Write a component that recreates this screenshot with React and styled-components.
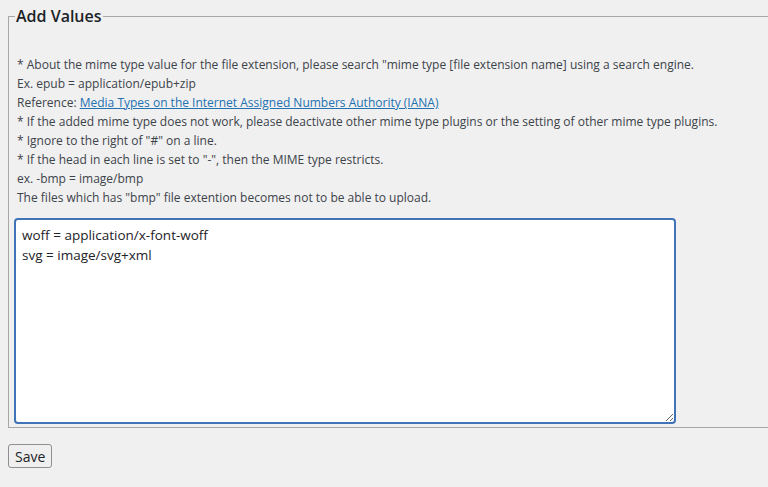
import React from 'react'
import styled, { createGlobalStyle } from 'styled-components'

const GlobalStyle = createGlobalStyle`
  html, body {
    margin: 0;
    background: #f0f0f0;
  }
  body {
    padding: 0 8px;
    font-family: "Open Sans", "Noto Sans", sans-serif;
    color: #3c434a;
  }
`;

const notes = [
  '* About the mime type value for the file extension, please search "mime type [file extension name] using a search engine.',
  'Ex. epub = application/epub+zip',
  null,
  '* If the added mime type does not work, please deactivate other mime type plugins or the setting of other mime type plugins.',
  '* Ignore to the right of "#" on a line.',
  '* If the head in each line is set to "-", then the MIME type restricts.',
  'ex. -bmp = image/bmp',
  'The files which has "bmp" file extention becomes not to be able to upload.',
];

function App() {
  return (
    <>
      <GlobalStyle />
      <Form onSubmit={(e) => e.preventDefault()}>
        <Fieldset>
          <Legend>Add Values</Legend>
          <Notes>
            {notes.map((line, i) =>
              line === null ? (
                <Line key={i}>
                  Reference: <Link href="#">Media Types on the Internet Assigned Numbers Authority (IANA)</Link>
                </Line>
              ) : (
                <Line key={i}>{line}</Line>
              )
            )}
          </Notes>
          <Values
            spellCheck
            defaultValue={'woff = application/x-font-woff\nsvg = image/svg+xml'}
          />
        </Fieldset>
        <SaveButton type="submit">Save</SaveButton>
      </Form>
    </>
  )
}

const Form = styled.form`
  display: flex;
  flex-direction: column;
  align-items: flex-start;
  gap: 16px;
  padding-top: 7px;
`;

const Fieldset = styled.fieldset`
  width: 744px;
  box-sizing: border-box;
  margin: 0;
  padding: 29px 75px 3px 5px;
  border: 1px solid #a7a7a7;
  display: flex;
  flex-direction: column;
  gap: 11px;
`;

const Legend = styled.legend`
  padding: 0 1px;
  margin-left: 1px;
  font-size: 16px;
  font-weight: 600;
  color: #1d2327;
  line-height: 19px;
`;

const Notes = styled.div`
  display: flex;
  flex-direction: column;
  padding-left: 3px;
  font-size: 12px;
  line-height: 19px;
`;

const Line = styled.div`
  white-space: nowrap;
`;

const Link = styled.a`
  color: #2271b1;
  text-decoration: underline;
`;

const Values = styled.textarea`
  width: 662px;
  height: 206px;
  box-sizing: border-box;
  resize: both;
  padding: 5px 6px;
  font-family: "Open Sans", "Noto Sans", sans-serif;
  font-size: 13.5px;
  line-height: 20px;
  color: #1d2327;
  background: #fff;
  border: 2px solid #3f74b8;
  border-radius: 4px;
  outline: none;
`;

const SaveButton = styled.button`
  font-family: "Open Sans", "Noto Sans", sans-serif;
  font-size: 14px;
  color: #1d2327;
  background: #efefef;
  border: 1px solid #8f8f8f;
  border-radius: 3px;
  padding: 1px 6px;
  height: 24px;
`;

export default App
